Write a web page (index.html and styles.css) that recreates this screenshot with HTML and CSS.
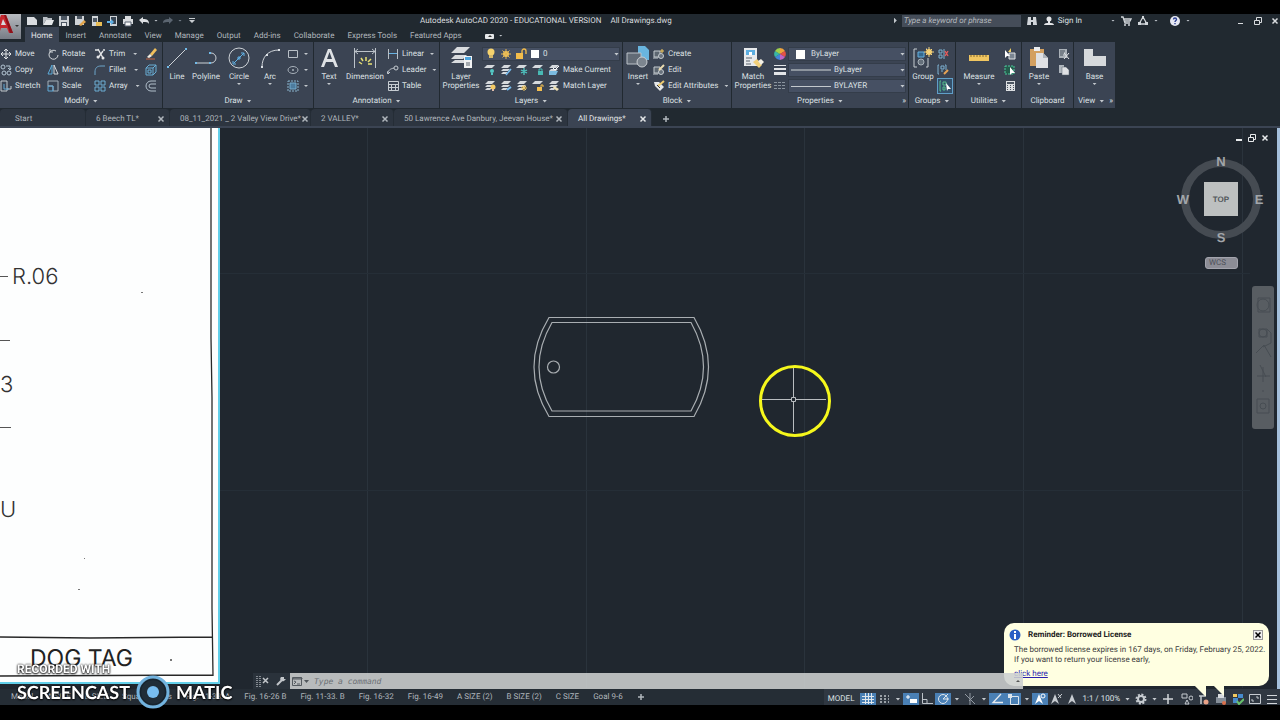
FILE: index.html
```html
<!DOCTYPE html>
<html lang="en">
<head>
<meta charset="utf-8">
<title>Autodesk AutoCAD 2020</title>
<link rel="stylesheet" href="styles.css">
</head>
<body>
<svg class="defs" aria-hidden="true">
  <symbol id="layers" viewBox="0 0 12 12"><path d="M4 1h7L8 4H1zM3 5h7L8 7H1zM3 8h5L6 10H1z" fill="#d5d9dd"/></symbol>
  <symbol id="x" viewBox="0 0 8 8"><path d="M1.500 1.500l5 5m0-5l-5 5" stroke="currentColor" stroke-width="1.500"/></symbol>
  <symbol id="restore" viewBox="0 0 8 8"><path d="M.5 3.500h5v4h-5zM2.500 3V.5h5v5H6" fill="none" stroke="currentColor"/></symbol>
</svg>

<header class="top">
  <button class="app-button" aria-label="Application menu"><svg width="21" height="26" viewBox="0 0 21 26"><path d="M-6 20L1 1h5l7 18H9L7 14H1l-2 6z" fill="#c5272e"/><path d="M1 11l2-6 3 6z" fill="#d8dade"/><path d="M4 1h2l7 18h-3z" fill="#8e1119"/><path d="M15 11h4l-2 2z" fill="#333"/></svg></button>
  <div class="top-rows">
    <div class="title-bar">
      <div class="quick">
        <button aria-label="New"><svg width="12" height="12"><path d="M1 2h7l3 3v5H1z" fill="#d9dcdf"/></svg></button>
        <button aria-label="Open"><svg width="12" height="12"><path d="M1 10V2h4l1 1h4v2H4z" fill="#b9bec4"/><path d="M4 5h8l-2 5H1z" fill="#e4e6e8"/></svg></button>
        <button aria-label="Save"><svg width="12" height="12"><path d="M1 1h10v10H1z" fill="#cfd3d7"/><path d="M3 1h6v4H3zM3 7h6v4H3z" fill="#4d5763"/><path d="M4 8h4v3H4z" fill="#e7e9eb"/></svg></button>
        <button aria-label="Save As"><svg width="12" height="12"><path d="M1 1h9v9H1z" fill="#cfd3d7"/><path d="M3 1h5v3H3z" fill="#4d5763"/><path d="M5 10l5-5 2 2-5 4z" fill="#e2a54a"/></svg></button>
        <button aria-label="Open from web"><svg width="12" height="12"><path d="M2 1h6v10H2z" fill="#cfd3d7"/><path d="M3 3h4v4H3z" fill="#4d5763"/><path d="M6 7h6v4H6z" fill="#e8bd55"/></svg></button>
        <button aria-label="Save to web"><svg width="12" height="12"><path d="M4 1h7v10H4z" fill="#cfd3d7"/><path d="M5 2h5v7H5z" fill="#394654"/><path d="M1 6h4V4l3 3-3 3V8H1z" fill="#5fb0e5"/></svg></button>
        <button aria-label="Plot"><svg width="12" height="12"><path d="M3 1h6v3H3zM1 4h10v5H1z" fill="#d9dcdf"/><path d="M3 7h6v4H3z" fill="#f4f4f4" stroke="#596370"/></svg></button>
        <button aria-label="Undo"><svg width="12" height="12"><path d="M1 5l4-3v2c4 0 6 1 6 5-1-2-3-2-6-2v2z" fill="#dde0e3"/></svg></button>
        <i class="caret"></i>
        <button aria-label="Redo"><svg width="12" height="12"><path d="M11 5L7 2v2C3 4 1 5 1 8c2-1 3-1 6-1v2z" fill="#5b6570"/></svg></button>
        <i class="caret dim"></i>
        <button aria-label="Customize"><svg width="12" height="12"><path d="M3 3h6v1H3zM3 5h6L6 8z" fill="#c9cdd1"/></svg></button>
      </div>
      <div class="title"><span>Autodesk AutoCAD 2020 - EDUCATIONAL VERSION</span><span>All Drawings.dwg</span></div>
      <div class="info">
        <i class="caret right"></i>
        <input class="search" type="text" aria-label="Search help" placeholder="Type a keyword or phrase">
        <button aria-label="Search"><svg width="12" height="12"><path d="M2 2h3v3h2V2h3l1 8H7V7H5v3H1z" fill="#d2d6da"/></svg></button>
        <button class="sign"><svg width="12" height="12"><circle cx="6" cy="4" r="2.500" fill="#e4e6e8"/><path d="M1 10c0-3 10-3 10 0z" fill="#e4e6e8"/><path d="M5 5h2v3H5z" fill="#e4e6e8"/></svg>Sign In</button>
        <i class="caret"></i>
        <button aria-label="App store"><svg width="12" height="12"><path d="M1 2h2l2 6h5M4 4h7l-1 2H5" fill="none" stroke="#d2d6da" stroke-width="1.300"/><circle cx="5" cy="10" r="1" fill="#d2d6da"/><circle cx="9" cy="10" r="1" fill="#d2d6da"/></svg></button>
        <button aria-label="Autodesk"><svg width="12" height="12"><path d="M6 2L2 9h8z" fill="none" stroke="#d2d6da" stroke-width="1.300"/><path d="M5 1h2v3H5zM1 7h3v3H1zM8 7h3v3H8z" fill="#d2d6da"/></svg></button>
        <i class="caret"></i>
        <button class="help" aria-label="Help"><svg width="12" height="12"><circle cx="6" cy="6" r="5" fill="#e6e8f2"/><path d="M4.500 4.500c0-2 3-2 3 0 0 1-1.500 1-1.500 2.500M6 8v1.300" fill="none" stroke="#2b3e91" stroke-width="1.400"/></svg></button>
        <i class="caret"></i>
        <div class="window">
          <button aria-label="Minimize"><svg width="8" height="8"><path d="M1 6h5v1H1z" fill="currentColor"/></svg></button>
          <button aria-label="Restore"><svg width="8" height="8"><use href="#restore"/></svg></button>
          <button aria-label="Close"><svg width="8" height="8"><use href="#x"/></svg></button>
        </div>
      </div>
    </div>
    <nav class="menu">
      <button class="on">Home</button><button>Insert</button><button>Annotate</button><button>View</button><button>Manage</button><button>Output</button><button>Add-ins</button><button>Collaborate</button><button>Express Tools</button><button>Featured Apps</button>
      <button class="min" aria-label="Minimize ribbon"><svg width="10" height="6"><rect width="9" height="5" y="1" rx="1" fill="#e6e8ea"/><path d="M3 4h4L5 2z" fill="#333"/></svg><i class="caret"></i></button>
    </nav>
  </div>
</header>

<main class="ribbon">
  <section class="panel modify">
    <div class="tools">
      <button><svg width="12" height="12"><path d="M6 1v10M1 6h10M4 3l2-2 2 2M4 9l2 2 2-2M3 4L1 6l2 2M9 4l2 2-2 2" fill="none" stroke="#dfe2e5"/></svg>Move</button>
      <button><svg width="12" height="12"><path d="M9 3a4.500 4.500 0 1 0 2 4M3 1v3h3" fill="none" stroke="#d5d9dd"/></svg>Rotate</button>
      <button><svg width="12" height="12"><path d="M1 2h4M9 2h2M4 1l5 9M9 3L4 10" stroke="#e4e6e8" stroke-width="1.400"/><circle cx="4" cy="9" r="1.500" fill="#e4e6e8"/><circle cx="9" cy="10" r="1.500" fill="#e4e6e8"/></svg>Trim<i class="caret"></i></button>
      <button aria-label="Erase"><svg width="12" height="12"><path d="M10 0l2 2-5 6-2-2z" fill="#f0bf5c"/><path d="M5 6l2 2-3 2-2-1z" fill="#f2ede2"/><path d="M1 11h9" stroke="#c76442"/></svg></button>
      <button><svg width="12" height="12"><g fill="none" stroke="#b4c6d4"><circle cx="3" cy="3" r="2"/><circle cx="4" cy="9" r="2"/><circle cx="9" cy="9" r="2"/><path d="M6 2h4v4M8 4l2 2 1-2"/></g></svg>Copy</button>
      <button><svg width="12" height="12"><path d="M5 1v9H1z" fill="none" stroke="#5dabd9"/><path d="M7 1v9h4z" fill="none" stroke="#d5d9dd"/></svg>Mirror</button>
      <button><svg width="12" height="12"><path d="M1 11V8c0-4 2-6 6-6h4" fill="none" stroke="#6da5ca"/></svg>Fillet<i class="caret"></i></button>
      <button aria-label="Explode"><svg width="12" height="12"><path d="M1 4h7v7H1zM1 4l3-3h7v7l-3 3M8 4l3-3M3 6h3v3H3z" fill="none" stroke="#69add5"/></svg></button>
      <button><svg width="12" height="12"><path d="M1 1h6v10H1zM7 9h4V6" fill="none" stroke="#c3c9ce"/><path d="M4 4v5h5" fill="none" stroke="#62a9d5"/></svg>Stretch</button>
      <button><svg width="12" height="12"><path d="M1 1h10v10H6V6H1z" fill="none" stroke="#a3adb7"/><path d="M1 6h5v5H1z" fill="none" stroke="#61a9d7"/></svg>Scale</button>
      <button><svg width="12" height="12"><path d="M1 1h4v4H1zM7 1h4v4H7zM1 7h4v4H1zM7 7h4v4H7z" fill="#344351" stroke="#6faed5"/></svg>Array<i class="caret"></i></button>
      <button aria-label="Offset"><svg width="12" height="12"><path d="M11 1H6a5 5 0 0 0 0 10h5M11 4H6a2 2 0 0 0 0 4h5" fill="none" stroke="#b1bfcb"/></svg></button>
    </div>
    <h2>Modify<i class="caret big"></i></h2>
  </section>

  <section class="panel draw">
    <div class="tools">
      <button class="large"><svg width="24" height="24"><path d="M3 21L21 3" stroke="#cdd2d7"/><path d="M2 20h2v2H2zM20 2h2v2h-2z" fill="#71bbe9"/></svg>Line</button>
      <button class="large"><svg width="24" height="24"><path d="M2 17h15a4.500 4.500 0 0 0 0-10" fill="none" stroke="#cdd2d7"/><path d="M1 16h2v2H1zM15 16h2v2h-2zM15 6h2v2h-2z" fill="#71bbe9"/></svg>Polyline</button>
      <button class="large"><svg width="24" height="24"><circle cx="12" cy="12" r="10" fill="none" stroke="#cdd2d7"/><path d="M7 17L17 7M14 7h3v3M11 11h2v2h-2zM6 15v3h3" fill="none" stroke="#62b3e8"/></svg>Circle<i class="caret"></i></button>
      <button class="large"><svg width="24" height="24"><path d="M4 21C4 11 10 4 21 4" fill="none" stroke="#cdd2d7"/><path d="M3 20h2v2H3zM8 8h2v2H8zM20 3h2v2h-2z" fill="#dce1e6"/></svg>Arc<i class="caret"></i></button>
      <div class="list">
        <button aria-label="Rectangle"><svg width="12" height="12"><path d="M1.500 2.500h9v7h-9z" fill="none" stroke="#b9c0c7"/></svg><i class="caret"></i></button>
        <button aria-label="Ellipse"><svg width="12" height="12"><ellipse cx="6" cy="6" rx="5" ry="3.500" fill="none" stroke="#a7b0b9"/><circle cx="6" cy="6" r="1" fill="#a7b0b9"/></svg><i class="caret"></i></button>
        <button aria-label="Hatch"><svg width="12" height="12"><path d="M1 1h10v10H1z" fill="none" stroke="#8ab4cf" stroke-dasharray="2 1"/><path d="M3 3h6v6H3z" fill="#4d7c9e" stroke="#75aacc"/></svg><i class="caret"></i></button>
      </div>
    </div>
    <h2>Draw<i class="caret big"></i></h2>
  </section>

  <section class="panel annotation">
    <div class="tools">
      <button class="large"><svg width="24" height="24"><path d="M4 21L11 3h3l7 18h-3l-2-5H9l-2 5zM10 13h5l-2.500-7z" fill="#dfe2e5"/></svg>Text<i class="caret"></i></button>
      <button class="large"><svg width="24" height="24"><path d="M1.500 2v20M22.500 2v20M2 5.500h20M5 3L2 5.500 5 8M19 3l3 2.500L19 8" fill="none" stroke="#bcc3ca"/><path d="M6 16l3 2M8 12l2 3M13 11v4M18 13l-3 3M19 18h-4" stroke="#e7df74" stroke-width="1.500"/></svg>Dimension</button>
      <div class="list">
        <button><svg width="12" height="12"><path d="M1.500 1v10M10.500 1v10" stroke="#b9c0c7"/><path d="M2 5.500h8" stroke="#69b3e2"/></svg>Linear<i class="caret"></i></button>
        <button><svg width="12" height="12"><path d="M1 10c0-4 2-5 6-6M1 10l2-2M1 10L0 7" fill="none" stroke="#c6ccd1"/><circle cx="9" cy="4" r="2" fill="none" stroke="#c6ccd1"/></svg>Leader<i class="caret"></i></button>
        <button><svg width="12" height="12"><path d="M1.500 1.500h10v9h-10zM1 4.500h10M1 7.500h10M4.500 4v7M8.500 4v7" fill="none" stroke="#c6ccd1"/></svg>Table</button>
      </div>
    </div>
    <h2>Annotation<i class="caret big"></i></h2>
  </section>

  <section class="panel layers">
    <div class="tools">
      <button class="large"><svg width="24" height="24"><path d="M8 1h13l-6 6H2zM6 9h12l-4 4H2zM6 14h9v3H2z" fill="#d9dcdf"/><path d="M15 10h8v12h-8z" fill="#f1f2f3"/><path d="M16 11h6v3h-6z" fill="#4ea5de"/><path d="M17 17h4M17 19h4" stroke="#59636d"/></svg><span>Layer<br>Properties</span></button>
      <div class="layer-side">
        <button class="combo layer-combo"><svg width="12" height="12"><circle cx="6" cy="4" r="3.500" fill="#f5d26e"/><path d="M4 7h4v3H4z" fill="#d6b96a"/></svg><svg width="12" height="12"><circle cx="6" cy="6" r="3" fill="#f5c85c"/><path d="M6 1v10M1 6h10M2.500 2.500l7 7M9.500 2.500l-7 7" stroke="#e5b652"/></svg><svg width="12" height="12"><path d="M1 5h7v6H1z" fill="#f4bd4b"/><path d="M7 5V3a2 2 0 0 1 4 0v3" fill="none" stroke="#f4bd4b" stroke-width="1.300"/></svg><i class="swatch"></i><span>0</span><i class="caret big"></i></button>
        <div class="row">
          <button aria-label="Off"><svg width="12" height="12"><path d="M3 1h8L8 4H0z" fill="#d5d9dd"/><circle cx="8" cy="7" r="2" fill="#54c7c4"/><path d="M7 9h2v2H7z" fill="#54c7c4"/></svg></button>
          <button aria-label="Isolate"><svg width="12" height="12"><use href="#layers"/><path d="M6 11l5-6" stroke="#78bdf0" stroke-width="1.500"/></svg></button>
          <button aria-label="Freeze"><svg width="12" height="12"><path d="M3 1h8L8 4H0z" fill="#d5d9dd"/><path d="M8 4v7M5 6l6 3M11 6L5 9" stroke="#50c7c3" stroke-width="1.300"/></svg></button>
          <button aria-label="Lock"><svg width="12" height="12"><path d="M3 1h8L8 4H0z" fill="#d5d9dd"/><path d="M6 7h5v4H6z" fill="#49b9b4"/><path d="M7 7V5h3v2" fill="none" stroke="#49b9b4"/></svg></button>
          <button><svg width="12" height="12"><use href="#layers"/><path d="M1 7h9l-2 4H1z" fill="#7bbbe0"/><path d="M5 4l2 2 4-4" stroke="#fff" fill="none"/></svg>Make Current</button>
        </div>
        <div class="row">
          <button aria-label="Turn all on"><svg width="12" height="12"><use href="#layers"/><circle cx="9" cy="7" r="2.500" fill="#f3ca65"/><path d="M8 9h2v2H8z" fill="#dba"/></svg></button>
          <button aria-label="Unisolate"><svg width="12" height="12"><use href="#layers"/><path d="M7 10l4-3" stroke="#78bdf0" stroke-width="2"/></svg></button>
          <button aria-label="Thaw"><svg width="12" height="12"><use href="#layers"/><path d="M8 5v6M5 8h6M6 6l4 4M10 6l-4 4" stroke="#f3ca65"/></svg></button>
          <button aria-label="Unlock"><svg width="12" height="12"><path d="M3 1h8L8 4H0z" fill="#d5d9dd"/><path d="M5 7h5v4H5z" fill="#f3bf50"/><path d="M9 7V5h2v2" fill="none" stroke="#f3bf50"/></svg></button>
          <button><svg width="12" height="12"><use href="#layers"/><path d="M6 6l5 3-2 2-4-3z" fill="#f2e4b5"/></svg>Match Layer</button>
        </div>
      </div>
    </div>
    <h2>Layers<i class="caret big"></i></h2>
  </section>

  <section class="panel block">
    <div class="tools">
      <button class="large"><svg width="24" height="24"><path d="M12 0h7l4 4v10H12z" fill="#69b5df"/><path d="M1 7h14v11H1z" fill="#626b76" stroke="#bcc3ca"/><circle cx="16" cy="16" r="5" fill="#7c858f" stroke="#c9ced3"/></svg>Insert<i class="caret"></i></button>
      <div class="list">
        <button><svg width="12" height="12"><path d="M1 3h6v6H1zM0 10h5" fill="#5d6771" stroke="#c6ccd1"/><circle cx="8" cy="8" r="2.500" fill="#68727d" stroke="#c6ccd1"/><path d="M9 1v4M7 3h4" stroke="#f4cb63"/></svg>Create</button>
        <button><svg width="12" height="12"><path d="M1 3h6v6H1zM0 10h5" fill="#5d6771" stroke="#c6ccd1"/><circle cx="8" cy="8" r="2.500" fill="#68727d" stroke="#c6ccd1"/><path d="M6 6l5-5" stroke="#eadbb0" stroke-width="2"/></svg>Edit</button>
        <button><svg width="12" height="12"><path d="M1 2h5l5 5-4 4-5-5z" fill="#e4e6e8"/><path d="M5 6l6-5" stroke="#eecb6f" stroke-width="2"/><path d="M4 5l3 3" stroke="#333"/></svg>Edit Attributes<i class="caret"></i></button>
      </div>
    </div>
    <h2>Block<i class="caret big"></i></h2>
  </section>

  <section class="panel properties">
    <div class="tools">
      <button class="large"><svg width="24" height="24"><path d="M3 2h13v18H3z" fill="#e8eaec"/><path d="M5 4h9v5H5z" fill="#5daee0"/><path d="M8 6h3v3H8z" fill="#fff"/><path d="M5 12h6M5 15h4M5 18h5" stroke="#59636d"/><path d="M12 16l6 6 3-3-5-6z" fill="#f3d07a"/><path d="M17 15l3-2 3 3-3 3z" fill="#f3f0e6"/></svg><span>Match<br>Properties</span></button>
      <div class="list">
        <button aria-label="Color"><svg width="12" height="12"><path d="M6 6V0a6 6 0 0 1 5 3z" fill="#f0a23b"/><path d="M6 6l5-3a6 6 0 0 1 0 6z" fill="#e65245"/><path d="M6 6l5 3a6 6 0 0 1-5 3z" fill="#c063c5"/><path d="M6 6v6a6 6 0 0 1-5-3z" fill="#4285d8"/><path d="M6 6L1 9a6 6 0 0 1 0-6z" fill="#38b7a4"/><path d="M6 6L1 3a6 6 0 0 1 5-3z" fill="#9fd04b"/></svg></button>
        <button aria-label="Lineweight"><svg width="12" height="12"><path d="M0 1h12v1H0zM0 4h12v2H0zM0 8h12v3H0z" fill="#e4e6e8"/></svg></button>
        <button aria-label="Linetype"><svg width="12" height="12"><path d="M0 2.500h12M0 5.500h12M0 8.500h12" stroke="#8a949e" stroke-dasharray="3 1"/></svg></button>
      </div>
      <div class="list">
        <button class="combo"><i class="swatch"></i><span>ByLayer</span><i class="caret big"></i></button>
        <button class="combo"><i class="rule thick"></i><span>ByLayer</span><i class="caret big"></i></button>
        <button class="combo"><i class="rule"></i><span>BYLAYER</span><i class="caret big"></i></button>
      </div>
    </div>
    <h2>Properties<i class="caret big"></i><b class="launch">»</b></h2>
  </section>

  <section class="panel groups">
    <div class="tools">
      <button class="large"><svg width="24" height="24"><path d="M6 3H3v18h3M15 21h2V12M15 3h1" fill="none" stroke="#c6ccd1"/><path d="M7 6h6v5H7z" fill="#36688c" stroke="#66b0df"/><circle cx="10" cy="16" r="3" fill="#65707b" stroke="#a8b1b9"/><circle cx="18" cy="6" r="3" fill="#f4c75b"/><path d="M18 1v10M13 6h10M15 3l6 6M21 3l-6 6" stroke="#f4d585"/></svg>Group</button>
      <div class="list">
        <button aria-label="Ungroup"><svg width="12" height="12"><path d="M2 2h3v3H2zM2 7h3v3H2zM7 1v10" fill="none" stroke="#7eb2d3"/><path d="M8 3l3 5M11 3L8 8" stroke="#e45b5b" stroke-width="1.400"/></svg></button>
        <button aria-label="Group edit"><svg width="12" height="12"><path d="M2 1H1v9h1M4 2h3v3H4zM4 7h2M8 1h1v5" fill="none" stroke="#7eb2d3"/><path d="M7 10l4-4" stroke="#e8a455" stroke-width="2"/></svg></button>
        <button class="pressed" aria-label="Group selection"><svg width="12" height="12"><path d="M2 1H1v10h1M4 2h3v3H4zM4 7h2v3H4z" fill="none" stroke="#55bd8b"/><path d="M7 3l5 6H9l-1 2z" fill="#fff"/></svg></button>
      </div>
    </div>
    <h2>Groups<i class="caret big"></i></h2>
  </section>

  <section class="panel utilities">
    <div class="tools">
      <button class="large"><svg width="24" height="24"><path d="M2 9h20v6H2z" fill="#f0c661"/><path d="M4 9v2M7 9v2M10 9v2M13 9v2M16 9v2M19 9v2" stroke="#866a31"/></svg>Measure<i class="caret"></i></button>
      <div class="list">
        <button aria-label="Quick select"><svg width="12" height="12"><path d="M5 5h6v6H5z" fill="#7a8591" stroke="#dfe2e5"/><path d="M1 2l5 6H3l-2 2z" fill="#fff"/><path d="M7 0L4 4h3" fill="#f3d263"/></svg></button>
        <button aria-label="Select all"><svg width="12" height="12"><path d="M1 2h9v8H1z" fill="#245c4c" stroke="#4cc99b" stroke-dasharray="2 1"/><path d="M6 3l5 6H8l-2 2z" fill="#fff"/></svg></button>
        <button aria-label="Calculator"><svg width="12" height="12"><path d="M2 1h9v10H2z" fill="#dcdfe2"/><path d="M3 2h7v2H3zM3 5h1v1H3zM6 5h1v1H6zM9 5h1v1H9zM3 7h1v1H3zM6 7h1v1H6zM9 7h1v1H9zM3 9h1v1H3zM6 9h1v1H6zM9 9h1v1H9z" fill="#4c5662"/></svg></button>
      </div>
    </div>
    <h2>Utilities<i class="caret big"></i></h2>
  </section>

  <section class="panel clipboard">
    <div class="tools">
      <button class="large"><svg width="24" height="24"><path d="M3 3h14v17H3z" fill="#d3a060"/><path d="M7 1h6v4H7z" fill="#eceef0"/><path d="M9 7h7l5 5v10H9z" fill="#dfe1e4"/><path d="M16 7v5h5" fill="#adb3ba"/></svg>Paste<i class="caret"></i></button>
      <div class="list">
        <button aria-label="Cut"><svg width="12" height="12"><path d="M1 1h8v9H1z" fill="#aab1b8"/><path d="M2 3h5M2 5h4M2 7h3" stroke="#454f5b"/><path d="M6 5l5 6M11 5l-5 6" stroke="#e2e4e7"/></svg></button>
        <button aria-label="Copy to clipboard"><svg width="12" height="12"><path d="M1 1h5v8H1z" fill="#aeb5bc"/><path d="M4 3h4l3 3v5H4z" fill="#dfe1e4" stroke="#56606c" stroke-width=".5"/></svg></button>
      </div>
    </div>
    <h2>Clipboard</h2>
  </section>

  <section class="panel view">
    <div class="tools">
      <button class="large"><svg width="24" height="24"><path d="M1 3h9v7h13v10H1z" fill="#d6d9dc"/></svg>Base<i class="caret"></i></button>
    </div>
    <h2>View<i class="caret big"></i><b class="launch">»</b></h2>
  </section>
</main>

<nav class="files">
  <div class="file"><button>Start</button></div>
  <div class="file"><button>6 Beech TL*</button><button class="close" aria-label="Close tab"><svg width="8" height="8"><use href="#x"/></svg></button></div>
  <div class="file"><button>08_11_2021 _ 2 Valley View Drive*</button><button class="close" aria-label="Close tab"><svg width="8" height="8"><use href="#x"/></svg></button></div>
  <div class="file"><button>2 VALLEY*</button><button class="close" aria-label="Close tab"><svg width="8" height="8"><use href="#x"/></svg></button></div>
  <div class="file"><button>50 Lawrence Ave Danbury, Jeevan House*</button><button class="close" aria-label="Close tab"><svg width="8" height="8"><use href="#x"/></svg></button></div>
  <div class="file on"><button>All Drawings*</button><button class="close" aria-label="Close tab"><svg width="8" height="8"><use href="#x"/></svg></button></div>
  <button class="add" aria-label="New drawing"><svg width="8" height="8"><path d="M4 1v6M1 4h6" stroke="currentColor" stroke-width="1.500"/></svg></button>
</nav>

<section class="workspace">
  <svg class="drawing" width="1280" height="560">
    <path d="M367.500 0v560M586.500 0v560M804.500 0v560M1023.500 0v560M1242.500 0v560" stroke="#2a333c"/>
    <path d="M220 145.500h1030M220 362.500h1030" stroke="#252e37"/>
    <rect width="218" height="555" fill="#fdfefe"/>
    <path d="M219 0v555M0 555h220" stroke="#62cfe9" stroke-width="2"/>
    <path d="M211 0v210l1 60v210l1 68M0 509l90 1 122-1M0 548l213-1" fill="none" stroke="#282828" stroke-width="1.300"/>
    <path d="M0 148.500h8M0 212.500h10M0 299.500h11" stroke="#555"/>
    <g class="scan">
      <text x="12" y="156" font-size="22">R.06</text>
      <text x="0" y="264" font-size="22">3</text>
      <text x="0" y="389" font-size="22">U</text>
      <text class="dark" x="30" y="538" font-size="23">DOG TAG</text>
    </g>
    <path d="M170 531h2v2h-2zM141 164h2v1h-2zM78 461h2v1h-2zM84 430h1v1h-1z" fill="#777"/>
    <g fill="none" stroke="#a9aeb2" stroke-width="1.200">
      <path d="M549 189.500H694Q723 239 694 288.500H549Q519 239 549 189.500z"/>
      <path d="M552 194.500H691Q716 239 691 283H552Q526 239 552 194.500z"/>
      <circle cx="553.500" cy="239" r="6"/>
    </g>
    <circle cx="795" cy="273" r="34.500" fill="none" stroke="#f5f71c" stroke-width="3"/>
    <path d="M793.500 240v30M793.500 274v30M762 271.500h29.500M796 271.500h30M791.500 269.500h4v4h-4z" fill="none" stroke="#b9bdc0"/>
  </svg>
  <div class="view-tools">
    <div class="window"><button aria-label="Minimize drawing"><svg width="8" height="8"><path d="M1 5h6v2H1z" fill="currentColor"/></svg></button><button aria-label="Restore drawing"><svg width="8" height="8"><use href="#restore"/></svg></button><button aria-label="Close drawing"><svg width="8" height="8"><use href="#x"/></svg></button></div>
    <svg class="cube" width="92" height="92">
      <circle cx="46" cy="46" r="36" fill="none" stroke="#454b52" stroke-width="8"/>
      <rect x="29" y="29" width="34" height="34" fill="#bdc0c0"/>
      <g class="compass"><text x="46" y="13">N</text><text x="46" y="89">S</text><text x="8" y="51">W</text><text x="84" y="51">E</text></g>
      <text class="face" x="46" y="49">TOP</text>
    </svg>
    <button class="wcs">WCS</button>
    <div class="navbar"><svg width="20" height="130"><g fill="none" stroke="#474d53"><path d="M5 3h12v14H5z"/><circle cx="10" cy="10" r="6"/><path d="M6 34h8v8H6zM14 34l4 4v10l-8 4M3 58l8-8 7 12M10 72v15M4 81h13M7 70l6 12M9 96h2M4 104h12v14H4z"/><circle cx="10" cy="38" r="4"/><circle cx="10" cy="111" r="3"/></g></svg></div>
  </div>
  <div class="edge"></div>

  <div class="balloon" role="alertdialog" aria-labelledby="remind">
    <svg class="tails" width="32" height="12"><path d="M0 0h12v12zM19 0h11v11z" fill="#ffffe1"/></svg>
    <div class="balloon-head"><svg width="12" height="12"><circle cx="6" cy="6" r="5.500" fill="#2b5fc4"/><path d="M5 2h2v2H5zM5 5h2v5H5z" fill="#fff"/></svg><strong id="remind">Reminder: Borrowed License</strong><button aria-label="Close reminder"><svg width="8" height="8"><use href="#x"/></svg></button></div>
    <p>The borrowed license expires in 167 days, on Friday, February 25, 2022.<br>If you want to return your license early,</p>
    <a href="#license">click here</a>
  </div>

  <div class="command">
    <svg width="37" height="16"><path d="M4 3v12M7 3v12" stroke="#a2a8ae" stroke-width="1.500" stroke-dasharray="1 1"/><path d="M10 5l5 5m0-5l-5 5" stroke="#c2c6ca" stroke-width="1.500"/><path d="M24 12l5-5" stroke="#c2c6ca" stroke-width="2"/><path d="M28 4c-2 2 0 5 3 4l2-2-2 0 0-2z" fill="#c2c6ca"/></svg>
    <div class="entry"><svg width="20" height="12"><path d="M2.500 2.500h9v8h-9z" fill="none" stroke="#555b60"/><path d="M3 3h9v1H3zM4 6l2 1-2 2M7 9h3" fill="none" stroke="#555b60"/><path d="M14 5h5l-2.500 3z" fill="#50565b"/></svg><input type="text" aria-label="Command line" placeholder="Type a command"><svg width="8" height="6"><path d="M1 4h4L3 2z" fill="#555"/></svg></div>
  </div>
</section>

<footer class="bottom">
  <nav class="layouts"><button>Model</button><button>A SIZE</button><button>B SIZE</button><button>Square Heads</button><button>Fig. 11-33. A</button><button>Fig. 16-26 B</button><button>Fig. 11-33. B</button><button>Fig. 16-32</button><button>Fig. 16-49</button><button>A SIZE (2)</button><button>B SIZE (2)</button><button>C SIZE</button><button>Goal 9-6</button><button aria-label="New layout"><svg width="8" height="8"><path d="M4 1v6M1 4h6" stroke="currentColor" stroke-width="1.500"/></svg></button></nav>
  <div class="status">
    <button class="word model">MODEL</button>
    <button class="on" aria-label="Grid"><svg width="12" height="12"><path d="M3.500 0v11M6.500 0v11M9.500 0v11M0 3.500h12M0 6.500h12M0 9.500h12" stroke="#dfe6ec"/></svg></button>
    <button aria-label="Snap"><svg width="12" height="12"><path d="M2 3h9M2 6h9M2 9h9" stroke="#bdc3c9" stroke-width="1.500" stroke-dasharray="2 2"/></svg></button>
    <i class="caret big"></i>
    <button class="on" aria-label="Dynamic input"><svg width="12" height="12"><path d="M1 4h4M3 2v4" stroke="#fff"/><path d="M5 6h7v4H5z" fill="#fff"/></svg></button>
    <button aria-label="Ortho"><svg width="12" height="12"><path d="M1.500 0v10.500H12M2 6.500h4V10" fill="none" stroke="#bdc3c9"/></svg></button>
    <button class="on" aria-label="Polar"><svg width="12" height="12"><circle cx="6" cy="6" r="4.500" fill="none" stroke="#e1e7ec"/><path d="M6 6l5-5M6 6h6" stroke="#e1e7ec"/></svg></button>
    <i class="caret big"></i>
    <button aria-label="Isodraft"><svg width="12" height="12"><path d="M1 1l10 10M6 0v12M10 3L5 8" stroke="#929aa3"/></svg></button>
    <i class="caret big"></i>
    <button class="on" aria-label="Tracking"><svg width="12" height="12"><path d="M10 1L2 9.500h10" fill="none" stroke="#e7ebef" stroke-width="1.300"/></svg></button>
    <button class="on" aria-label="Object snap"><svg width="12" height="12"><path d="M3.500 3.500h8v8h-8z" fill="none" stroke="#dce5ec"/><path d="M1 1h4v4H1z" fill="#dce5ec"/></svg></button>
    <i class="caret big"></i>
    <button class="on" aria-label="Annotation visibility"><svg width="12" height="12"><path d="M5 1l4 10-4-3-4 3z" fill="#fff"/><circle cx="9" cy="3" r="2" fill="none" stroke="#fff"/></svg></button>
    <button aria-label="Auto scale"><svg width="12" height="12"><path d="M5 1l4 10-4-3-4 3z" fill="#c6cbd0"/><path d="M8 1l3 4M8 5l4-4" stroke="#c6cbd0"/></svg></button>
    <button aria-label="Annotation scale"><svg width="12" height="12"><path d="M6 1l4 10-4-3-4 3z" fill="#c6cbd0"/></svg></button>
    <button class="word">1:1 / 100%</button>
    <i class="caret big"></i>
    <button aria-label="Workspace"><svg width="12" height="12"><circle cx="6" cy="6" r="3" fill="none" stroke="#c6cbd0" stroke-width="2"/><circle cx="6" cy="6" r="4.500" fill="none" stroke="#c6cbd0" stroke-width="2" stroke-dasharray="2 1.500"/></svg></button>
    <i class="caret big"></i>
    <button aria-label="Annotation monitor"><svg width="12" height="12"><path d="M6 1v10M1 6h10" stroke="#d2d6da" stroke-width="1.500"/></svg></button>
    <div class="tray">
      <button aria-label="Isolate objects"><svg width="12" height="12"><path d="M1 1h5v4H1zM6 7l2 4H4z" fill="none" stroke="#c6cbd0"/><circle cx="10" cy="5" r="2" fill="none" stroke="#c6cbd0"/></svg></button>
      <button aria-label="License"><svg width="12" height="12"><path d="M3 3v8M1 3h6" stroke="#c6cbd0" stroke-width="1.500"/><circle cx="8" cy="9" r="2.500" fill="#e9a287"/></svg></button>
      <button aria-label="Plot status"><svg width="12" height="12"><path d="M1 4h10v6H1z" fill="#858e98"/><path d="M3 1h6v4H3z" fill="#d8dbde"/><circle cx="9" cy="10" r="2" fill="#da704c"/></svg></button>
      <button aria-label="Trusted file"><svg width="12" height="12"><path d="M1 1h4v3H1z" fill="#f1ca60"/><path d="M6 1h5v4H6zM1 5h5v5H1z" fill="#478bcd"/><path d="M5 8l2 3 5-5" fill="none" stroke="#68c16e" stroke-width="2"/></svg></button>
      <button aria-label="Clean screen"><svg width="12" height="12"><path d="M.5 1.500h11v9H.5zM3 8V6M3 8h2M9 4v2M9 4H7" fill="none" stroke="#c6cbd0"/></svg></button>
      <button aria-label="Customization"><svg width="12" height="12"><path d="M1 2.500h10M1 6.500h10M1 10.500h10" stroke="#d2d6da"/></svg></button>
    </div>
  </div>
</footer>

<aside class="mark">
  <span class="mark-small">RECORDED WITH</span>
  <div class="mark-name"><span>SCREENCAST</span><svg width="34" height="34"><circle cx="17" cy="17" r="15" fill="#202d38" stroke="#72b3df" stroke-width="3"/><circle cx="17" cy="17" r="12.500" fill="none" stroke="#14212c" stroke-width="1"/><circle cx="17" cy="17" r="6" fill="#78bdf0"/></svg><span>MATIC</span></div>
</aside>
</body>
</html>
```
FILE: styles.css
```css
* { box-sizing: border-box; }
body {
  margin: 0; padding: 14px 0 15px; height: 100vh; min-height: 400px;
  display: flex; flex-direction: column; overflow: hidden;
  background: #000; color: #dde0e3;
  font: 8px/12px Roboto, "Open Sans", sans-serif;
  text-rendering: geometricPrecision;
}
button { margin: 0; padding: 0; border: 0; background: none; color: inherit; font: inherit; text-rendering: inherit; display: flex; flex: none; align-items: center; white-space: nowrap; }
input { font: inherit; text-rendering: inherit; border: 0; padding: 0; min-width: 0; background: none; color: inherit; }
svg { display: block; flex: none; }
.defs { position: absolute; width: 0; height: 0; }

.caret { flex: none; width: 4px; height: 2px; background: #c3c8cd; clip-path: polygon(0 0, 100% 0, 50% 100%); }
.caret.big { width: 5px; height: 3px; }
.caret.dim { background: #7b848d; }
.caret.right { width: 3px; height: 6px; clip-path: polygon(0 0, 100% 50%, 0 100%); }

.top { display: flex; flex: none; height: 28px; background: #212930; }
.app-button { width: 21px; height: 25px; background: linear-gradient(#b8bbc0, #777c85); align-items: flex-start; overflow: hidden; }
.top-rows { flex: 1; min-width: 0; }
.title-bar { display: grid; grid-template-columns: auto 1fr auto; height: 13px; align-items: center; }
.quick { display: flex; align-items: center; gap: 4px; padding-left: 5px; }
.title { display: flex; justify-content: center; gap: 9px; color: #d9dcdf; }
.title, .info { white-space: nowrap; }
.info { display: flex; align-items: center; justify-content: flex-end; gap: 5px; }
.search { width: 119px; height: 12px; background: #454d59; padding-left: 2px; color: #c0c5ca; }
.search::placeholder { color: #b5babf; font-style: italic; opacity: 1; }
.sign { gap: 3px; padding-right: 24px; }
.help { padding-left: 6px; }
.window { display: flex; gap: 9px; padding-left: 42px; padding-right: 1px; color: #d9dcdf; }

.menu { display: flex; height: 15px; gap: 1px; padding-left: 4px; color: #b0b6bc; }
.menu button { padding: 2px 6px 0; }
.menu .on { background: #3b4453; color: #e4e6e8; }
.menu .min { padding-left: 16px; gap: 4px; }

.ribbon { display: flex; flex: none; height: 66px; background: #212930; gap: 1px; }
.panel { background: #3b4453; display: flex; flex-direction: column; flex: none; }
.tools { display: grid; height: 52px; padding-top: 4px; grid-auto-rows: 16px; }
.panel h2 { margin: 0; font: inherit; display: flex; align-items: center; justify-content: center; gap: 4px; height: 14px; position: relative; }
.launch { position: absolute; right: 2px; font-size: 8px; font-weight: 400; }
.tools button { gap: 3px; height: 16px; }
.tools .large { height: 48px; flex-direction: column; gap: 0; line-height: 9px; text-align: center; }
.large svg { margin-bottom: 2px; }
.large .caret { margin-top: 2px; }
.list { display: flex; flex-direction: column; }
.list .caret:not(.big) { margin-left: 2px; }
.row { display: flex; gap: 4px; }

.modify { width: 162px; }
.modify .tools { grid-template-columns: 47px 47px 51px 17px; }
.modify .tools .caret { margin-left: 5px; }
.draw { width: 150px; }
.draw .tools { grid-template-columns: 28px 30px 36px 26px 1fr; }
.draw .list { padding-left: 4px; }
.annotation { width: 125px; }
.annotation .tools { grid-template-columns: 30px 42px 1fr; }
.annotation .list { padding-left: 1px; }
.annotation .list .caret { margin-left: 3px; }
.layers { width: 182px; }
.layers .tools { grid-template-columns: 42px 1fr; }
.block { width: 108px; }
.block .tools { grid-template-columns: 30px 1fr; }
.block .tools .list .caret { margin-left: 3px; }
.properties { width: 176px; }
.properties .tools { grid-template-columns: 42px 14px 1fr; padding-right: 2px; }
.groups { width: 46px; }
.groups .tools { grid-template-columns: 28px 1fr; }
.utilities { width: 65px; }
.utilities .tools { grid-template-columns: 46px 1fr; }
.utilities .list { padding-left: 2px; }
.clipboard { width: 51px; }
.clipboard .tools { grid-template-columns: 34px 1fr; }
.clipboard .list { padding-left: 2px; }
.view { width: 41px; }
.view h2 { justify-content: flex-start; padding-left: 4px; }
.tools .pressed { width: 16px; background: #34506a; outline: 1px solid #609fc8; outline-offset: -1px; justify-content: center; }

.tools .combo { height: 14px; margin: 1px 0; background: #465063; border: 1px solid #343d4a; padding: 0 0 0 2px; gap: 3px; }
.combo .caret { margin-left: auto; }
.tools .layer-combo { width: 138px; }
.swatch { width: 9px; height: 9px; background: #fff; margin: 0 3px 0 5px; flex: none; }
.layer-combo .swatch { width: 8px; height: 8px; margin: 0 1px; }
.rule { width: 40px; height: 1px; background: #c3c8cd; flex: none; }
.rule.thick { height: 2px; background: #8d959e; }
.layer-side .row { padding-left: 2px; }

.files { flex: none; display: grid; grid-template-columns: 86px 84px 141px 83px 174px 84px 24px; height: 20px; background: #212930; border-bottom: 2px solid #3b4453; color: #b0b6bc; padding-top: 1px; }
.files button { padding-top: 2px; }
.file { display: flex; justify-content: space-between; padding: 0 4px 0 10px; background: #2d3540; border-radius: 4px 4px 0 0; border-right: 1px solid #252d36; }
.file:first-child { padding-left: 15px; }
.file.on { background: #3b4453; color: #e4e6e8; }
.files .add { justify-content: center; padding-left: 4px; }

.workspace { position: relative; z-index: 1; flex: 1; min-height: 0; background: #20272f; display: flex; justify-content: flex-end; }
.drawing { position: absolute; left: 0; top: 0; }
.scan { font-family: Inter, "Open Sans", sans-serif; font-weight: 300; fill: #333; }
.scan .dark { font-weight: 400; fill: #222; }
.view-tools { position: relative; display: flex; flex-direction: column; align-items: flex-end; padding: 6px 3px 0 0; }
.view-tools .window { padding: 0 5px 0 0; gap: 5px; color: #e8eaec; }
.cube { margin: 11px 7px 0 0; }
.compass { font: bold 13px "Liberation Sans", sans-serif; fill: #a2a6aa; text-anchor: middle; }
.face { font: bold 8px "Liberation Sans", sans-serif; fill: #50565a; text-anchor: middle; }
.wcs { width: 33px; height: 12px; margin: 12px 36px 17px 0; padding-left: 3px; background: #8c8d96; border: 1px solid #a3a4ad; border-radius: 3px; color: #4d5058; }
.navbar { width: 22px; height: 143px; background: #585d62; border-radius: 3px; padding: 9px 0 0 1px; }
.edge { width: 3px; background: #a4bfdb; position: relative; }

.balloon { position: absolute; right: 11px; bottom: 3px; width: 265px; height: 63px; padding: 5px 6px 0 5px; background: #ffffe1; color: #3c3c3c; border-radius: 10px; line-height: 10px; }
.balloon-head { display: flex; align-items: center; gap: 7px; height: 13px; color: #222; }
.balloon-head button { margin-left: auto; width: 10px; height: 10px; border: 1px solid #999; background: #eee; justify-content: center; color: #000; }
.balloon p { margin: 4px 0 4px 5px; white-space: nowrap; }
.balloon a { margin-left: 5px; color: #2a1fb0; }
.tails { position: absolute; left: 190px; top: 62px; }
.command { position: absolute; left: 253px; right: 257px; bottom: 0; height: 16px; display: flex; background: linear-gradient(to right, #2a323b 37px, transparent 37px); }
.entry { flex: 1; display: flex; align-items: center; gap: 4px; background: rgba(205, 208, 208, .88); }
.entry input { flex: 1; font: italic 8px "DejaVu Sans Mono", monospace; }
.entry input::placeholder { color: #6b7074; opacity: 1; }

.bottom { flex: none; height: 16px; display: flex; justify-content: space-between; background: #252d35; overflow: hidden; }
.layouts { display: flex; gap: 14px; padding-left: 11px; height: 16px; color: #b0b6bc; }
.status { display: flex; align-items: center; padding-top: 4px; background: #303842; }
.status button { width: 16px; height: 12px; justify-content: center; }
.status .on { background: #4a80b5; }
.status .word { width: auto; padding: 0 2px; }
.status .model { padding: 0 6px 0 4px; }
.status .caret { margin: 0 3px; }
.tray { display: flex; padding-left: 3px; gap: 1px; }

.mark { position: fixed; z-index: 2; left: 17px; bottom: 11px; color: #fff; font-family: Lato, "Open Sans", sans-serif; font-weight: 700; text-shadow: 0 0 2px #000, 0 1px 2px #000; }
.mark-small { display: block; font: 700 12px/14px Roboto, Lato, sans-serif; height: 13px; }
.mark-name { display: flex; align-items: center; gap: 6px; font-size: 18px; line-height: 34px; }
```
